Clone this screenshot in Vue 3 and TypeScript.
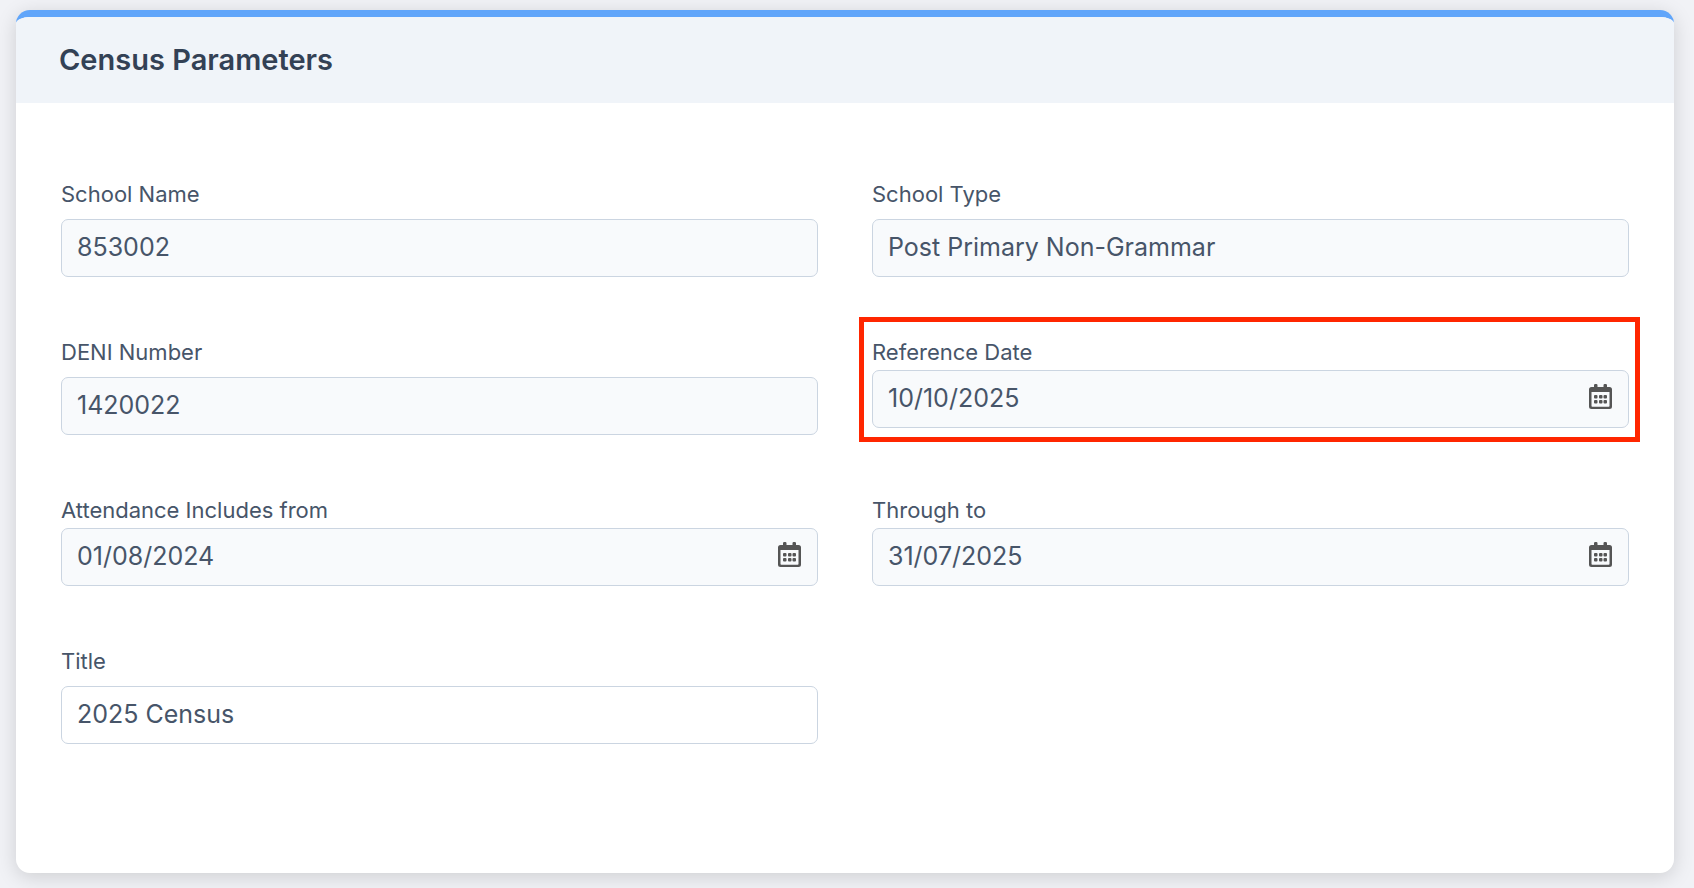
<script setup lang="ts">
import { reactive } from 'vue'

interface Field {
  id: string
  label: string
  value: string
  date?: boolean
  editable?: boolean
  highlighted?: boolean
}

const fields = reactive<Field[]>([
  { id: 'school-name', label: 'School Name', value: '853002' },
  { id: 'school-type', label: 'School Type', value: 'Post Primary Non-Grammar' },
  { id: 'deni-number', label: 'DENI Number', value: '1420022' },
  { id: 'reference-date', label: 'Reference Date', value: '10/10/2025', date: true, highlighted: true },
  { id: 'attendance-from', label: 'Attendance Includes from', value: '01/08/2024', date: true },
  { id: 'attendance-to', label: 'Through to', value: '31/07/2025', date: true },
  { id: 'title', label: 'Title', value: '2025 Census', editable: true },
])
</script>

<template>
  <main class="page">
    <section class="card" aria-labelledby="card-title">
      <header class="card-header">
        <h1 id="card-title">Census Parameters</h1>
      </header>
      <form class="card-body" @submit.prevent>
        <div
          v-for="field in fields"
          :key="field.id"
          class="field"
          :class="{ date: field.date, highlighted: field.highlighted }"
        >
          <label :for="field.id">{{ field.label }}</label>
          <div class="control" :class="{ editable: field.editable }">
            <input :id="field.id" v-model="field.value" type="text" :readonly="!field.editable" />
            <button v-if="field.date" type="button" :aria-label="'Choose date: ' + field.label">
              <svg width="23" height="25" viewBox="0 0 23 25" fill="#555" aria-hidden="true">
                <path
                  fill-rule="evenodd"
                  d="M5 1.2Q5 0 6.2 0H7.3Q8.5 0 8.5 1.2V3H14.5V1.2Q14.5 0 15.7 0H16.8Q18 0 18 1.2V3H20.5Q23 3 23 5.5V22.5Q23 25 20.5 25H2.5Q0 25 0 22.5V5.5Q0 3 2.5 3H5ZM2.5 8V22Q2.5 22.8 3.3 22.8H19.7Q20.5 22.8 20.5 22V8Z"
                />
                <rect x="5" y="11" width="3.5" height="3.5" rx="1" />
                <rect x="10" y="11" width="3.5" height="3.5" rx="1" />
                <rect x="14.5" y="11" width="3.5" height="3.5" rx="1" />
                <rect x="5" y="16" width="3.5" height="3.5" rx="1" />
                <rect x="10" y="16" width="3.5" height="3.5" rx="1" />
                <rect x="14.5" y="16" width="3.5" height="3.5" rx="1" />
              </svg>
            </button>
          </div>
        </div>
      </form>
    </section>
  </main>
</template>

<style>
body {
  margin: 0;
  background: #f1f2f6;
}
</style>

<style scoped>
.page {
  padding: 10px 20px 15px 16px;
  font-family: Inter, "Liberation Sans", sans-serif;
  color: #475569;
}

.card {
  overflow: hidden;
  border-top: 7px solid #60a5fa;
  border-radius: 14px;
  background: #fff;
  box-shadow: 0 4px 20px rgba(0, 0, 0, 0.15);
}

.card-header {
  padding: 25px 43px;
  background: #f0f4f9;
}

h1 {
  margin: 0;
  font-size: 29px;
  font-weight: 600;
  line-height: 36px;
  color: #334155;
}

.card-body {
  display: grid;
  grid-template-columns: repeat(2, minmax(0, 1fr));
  gap: 61px 54px;
  padding: 77px 45px 129px;
}

.field {
  position: relative;
  display: flex;
  flex-direction: column;
  gap: 11px;
}

.field.date {
  gap: 4px;
}

.field.highlighted::after {
  content: "";
  position: absolute;
  inset: -21px -11px -7px -13px;
  border: 5px solid #ff2600;
  pointer-events: none;
}

label {
  font-size: 22px;
  font-weight: 400;
  line-height: 28px;
}

.control {
  display: flex;
  align-items: center;
  box-sizing: border-box;
  height: 58px;
  padding: 0 16px 2px 15px;
  border: 1px solid #cbd5e1;
  border-radius: 7px;
  background: #f8fafc;
}

.control.editable {
  background: #fff;
}

input {
  flex: 1;
  min-width: 0;
  padding: 0;
  border: 0;
  outline: 0;
  background: transparent;
  font: inherit;
  font-size: 25px;
  line-height: 32px;
  color: inherit;
}

button {
  display: flex;
  padding: 0 0 4px;
  border: 0;
  background: transparent;
  cursor: pointer;
}
</style>
